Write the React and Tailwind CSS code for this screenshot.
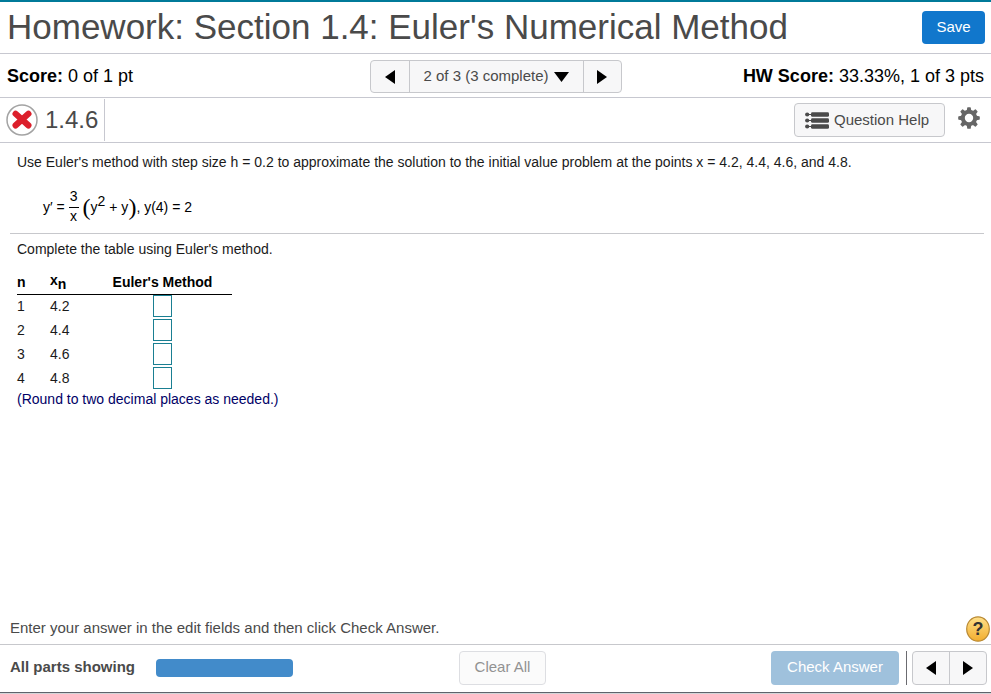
import { useState } from 'react';

const rows = [
  { n: 1, x: '4.2' },
  { n: 2, x: '4.4' },
  { n: 3, x: '4.6' },
  { n: 4, x: '4.8' },
];

function ArrowLeft() {
  return (
    <svg width="10" height="14" viewBox="0 0 10 14" aria-hidden="true">
      <path d="M10 0v14L0 7z" fill="#000" />
    </svg>
  );
}

function ArrowRight() {
  return (
    <svg width="10" height="14" viewBox="0 0 10 14" aria-hidden="true">
      <path d="M0 0v14l10-7z" fill="#000" />
    </svg>
  );
}

function WrongIcon() {
  return (
    <svg width="32" height="32" viewBox="0 0 32 32" role="img" aria-label="Incorrect">
      <circle cx="16" cy="16" r="15" fill="#fff" stroke="#a3a3a3" strokeWidth="1.5" />
      <path d="M9.6 9.8L22.4 21.4M22.4 9.8L9.6 21.4" stroke="#dc1f2b" strokeWidth="6.2" strokeLinecap="round" />
    </svg>
  );
}

function ListIcon() {
  return (
    <svg width="24" height="17" viewBox="0 0 24 17" aria-hidden="true" fill="#4a4a4a">
      {[2.5, 8.5, 14.5].map((y) => (
        <g key={y}>
          <circle cx="2.2" cy={y} r="2.1" />
          <path d={`M2 ${y}H7`} stroke="#4a4a4a" strokeWidth="1" />
          <rect x="6" y={y - 2.3} width="18" height="4.6" rx="1.4" />
        </g>
      ))}
    </svg>
  );
}

function GearIcon() {
  return (
    <svg width="22" height="22" viewBox="0 0 22 22" aria-hidden="true">
      <g fill="#666">
        {[0, 45, 90, 135, 180, 225, 270, 315].map((a) => (
          <path key={a} d="M8.6 5L9.2 .8Q9.3 .2 9.9 .2h2.2q.6 0 .7.6l.6 4.2z" transform={`rotate(${a} 11 11)`} />
        ))}
      </g>
      <circle cx="11" cy="11" r="6.2" fill="#fff" stroke="#666" strokeWidth="4" />
    </svg>
  );
}

function Header() {
  return (
    <header className="text-[#4a4a4a]">
      <div className="flex h-[52px] items-center justify-between border-b border-[#c7c8d0] pr-[6px] pl-[7px]">
        <h1 className="pb-[2px] text-[35px] leading-[48px] whitespace-nowrap">Homework: Section 1.4: Euler's Numerical Method</h1>
        <button className="h-[33px] w-[63px] rounded bg-[#1177cc] text-[15px] text-white">Save</button>
      </div>

      <div className="grid h-[44px] grid-cols-[1fr_auto_1fr] items-center border-b border-[#c7c8d0] px-[7px] pt-[2px] text-[18px] text-black">
        <p><b>Score:</b> 0 of 1 pt</p>
        <div className="flex h-[33px] rounded-sm border border-[#c7c8cc] bg-[#f7f7f8]">
          <button className="flex w-[38px] items-center justify-center" aria-label="Previous question"><ArrowLeft /></button>
          <button className="flex w-[175px] items-center justify-center gap-[5px] border-x border-[#c7c8cc] text-[15px] text-[#4a4a4a]">
            2 of 3 (3 complete)
            <svg width="15" height="10" viewBox="0 0 15 10" aria-hidden="true">
              <path d="M0 0h15L7.5 10z" fill="#000" />
            </svg>
          </button>
          <button className="flex w-[37px] items-center justify-center" aria-label="Next question"><ArrowRight /></button>
        </div>
        <p className="text-right"><b>HW Score:</b> 33.33%, 1 of 3 pts</p>
      </div>

      <div className="flex h-[45px] items-center justify-between border-b border-[#c7c8d0] pr-[11px] pl-[6px]">
        <div className="flex h-[42px] items-center gap-[7px] border-r border-[#c7c8d0] pr-[6px]">
          <WrongIcon />
          <h2 className="text-[24px]">1.4.6</h2>
        </div>
        <div className="flex items-center gap-[13px]">
          <button className="flex h-[34px] w-[151px] items-center gap-[5px] rounded-sm border border-[#c7c8cc] bg-[#f7f7f8] pl-[10px] text-[15px]">
            <ListIcon />
            Question Help
          </button>
          <button className="pb-[4px]" aria-label="Settings"><GearIcon /></button>
        </div>
      </div>
    </header>
  );
}

function Equation() {
  return (
    <div className="flex h-[40px] items-center pl-[26px] text-[14px] text-black">
      <span>y′ =</span>
      <span className="mx-1 flex flex-col items-center pb-[2px] leading-[16px]">
        <span className="border-b border-black px-px pb-[3px]">3</span>
        <span>x</span>
      </span>
      <span className="font-['Liberation_Serif',serif] text-[24px] leading-[24px]">(</span>
      <span>y</span>
      <span className="pb-[12px]">2</span>
      <span className="ml-1">+ y</span>
      <span className="font-['Liberation_Serif',serif] text-[24px] leading-[24px]">)</span>
      <span>, y(4) = 2</span>
    </div>
  );
}

function AnswerTable() {
  const [answers, setAnswers] = useState({});

  return (
    <table className="mt-[12px] w-[215px] border-collapse text-left text-[14px] leading-[18px]">
      <thead>
        <tr className="h-[24px] border-b border-black text-black">
          <th className="w-[33px]">n</th>
          <th className="w-[43px]">
            <span className="flex">x<span className="pt-1">n</span></span>
          </th>
          <th className="text-center whitespace-nowrap">Euler's Method</th>
        </tr>
      </thead>
      <tbody>
        {rows.map((r) => (
          <tr key={r.n} className="h-[24px]">
            <td>{r.n}</td>
            <td>{r.x}</td>
            <td>
              <input
                aria-label={`Euler's Method, n = ${r.n}`}
                value={answers[r.n] || ''}
                onChange={(e) => setAnswers({ ...answers, [r.n]: e.target.value })}
                className="mx-auto block h-[22px] w-[19px] border border-[#1a7f92] bg-white px-[2px] text-[13px] outline-none"
              />
            </td>
          </tr>
        ))}
      </tbody>
    </table>
  );
}

function HelpBadge() {
  return (
    <button aria-label="Help">
      <svg width="24" height="26" viewBox="0 0 24 26" aria-hidden="true">
        <defs>
          <linearGradient id="gold" x1="0" y1="0" x2="0" y2="1">
            <stop offset="0" stopColor="#ffe08a" />
            <stop offset="1" stopColor="#f2ad2e" />
          </linearGradient>
        </defs>
        <ellipse cx="12" cy="13" rx="11.3" ry="12.2" fill="url(#gold)" stroke="#b98a35" strokeWidth="1.2" />
        <text x="12" y="19" textAnchor="middle" fontSize="18" fontWeight="bold" fill="#333">?</text>
      </svg>
    </button>
  );
}

function Footer() {
  return (
    <footer className="text-[15px] text-[#4a4a4a]">
      <div className="flex h-[30px] items-center justify-between pr-px pb-px pl-[10px]">
        <p>Enter your answer in the edit fields and then click Check Answer.</p>
        <HelpBadge />
      </div>
      <div className="grid h-[48px] grid-cols-[1fr_auto_1fr] items-center border-t border-[#c7c8cc] pr-[4px] pb-[2px] pl-[10px]">
        <div className="flex items-center gap-[21px]">
          <b>All parts showing</b>
          <div className="h-[18px] w-[137px] rounded bg-[#428bca]" />
        </div>
        <button disabled className="ml-2 h-[34px] w-[87px] rounded-sm border border-[#dddee2] bg-[#fbfbfb] text-[#929292]">Clear All</button>
        <div className="flex items-center justify-end">
          <button disabled className="h-[34px] w-[128px] rounded-sm bg-[#9fc1dc] text-white">Check Answer</button>
          <div className="mr-[5px] ml-[7px] h-[34px] w-px bg-[#6b6b70]" />
          <div className="flex h-[34px] rounded-sm border border-[#c7c8cc] bg-[#f7f7f8]">
            <button className="flex w-[37px] items-center justify-center border-r border-[#c7c8cc]" aria-label="Previous"><ArrowLeft /></button>
            <button className="flex w-[36px] items-center justify-center" aria-label="Next"><ArrowRight /></button>
          </div>
        </div>
      </div>
      <div className="h-[2px] border-t border-[#5f636b] bg-[#d4d5d8]" />
    </footer>
  );
}

export default function App() {
  return (
    <div className="flex min-h-screen flex-col border-t-2 border-[#007a99] bg-white font-['Liberation_Sans',Arial,sans-serif]">
      <Header />
      <main className="flex-1 pr-[7px] pl-[10px] text-[14px] text-[#1a1a1a]">
        <p className="pt-[10px] pl-[7px] leading-[18px]">
          Use Euler's method with step size h = 0.2 to approximate the solution to the initial value problem at the points x = 4.2, 4.4, 4.6, and 4.8.
        </p>
        <div className="mt-[16px] pl-[7px]"><Equation /></div>
        <hr className="mt-[6px] border-[#c7c8cc]" />
        <div className="pt-[6px] pl-[7px]">
          <p className="leading-[18px]">Complete the table using Euler's method.</p>
          <AnswerTable />
          <p className="leading-[18px] text-[#000066]">(Round to two decimal places as needed.)</p>
        </div>
      </main>
      <Footer />
    </div>
  );
}
